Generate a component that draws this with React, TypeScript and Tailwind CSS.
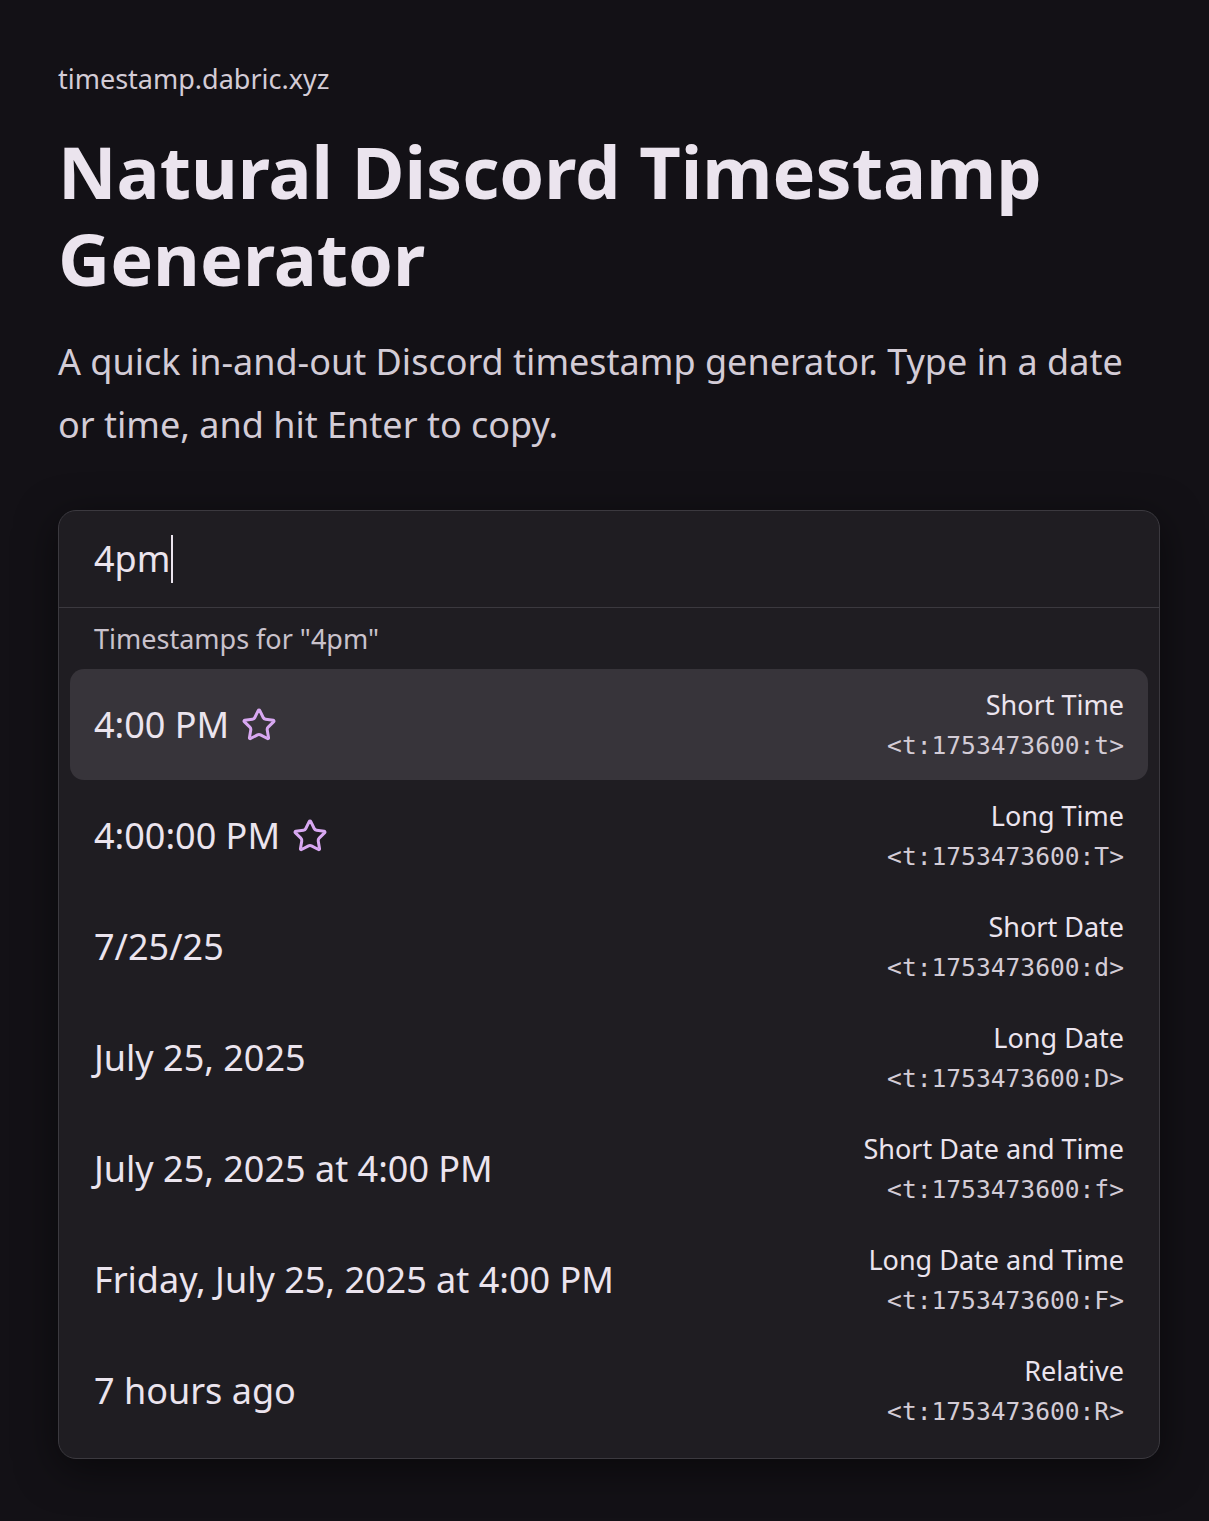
import { Star } from 'lucide-react';

const rows = [
  { text: '4:00 PM', star: true, label: 'Short Time', code: 't' },
  { text: '4:00:00 PM', star: true, label: 'Long Time', code: 'T' },
  { text: '7/25/25', star: false, label: 'Short Date', code: 'd' },
  { text: 'July 25, 2025', star: false, label: 'Long Date', code: 'D' },
  { text: 'July 25, 2025 at 4:00 PM', star: false, label: 'Short Date and Time', code: 'f' },
  { text: 'Friday, July 25, 2025 at 4:00 PM', star: false, label: 'Long Date and Time', code: 'F' },
  { text: '7 hours ago', star: false, label: 'Relative', code: 'R' },
];

export default function App() {
  return (
    <div className="min-h-[1521px] bg-[#131116] text-[#ebe4ee] font-['Noto_Sans',sans-serif] pl-[58px] pr-[49px] pt-[61px] pb-[62px]">
      <div className="text-[27px] leading-[36px] text-[#d3ccd6]">timestamp.dabric.xyz</div>
      <h1 className="mt-[31px] text-[72px] leading-[87px] font-bold">
        Natural Discord Timestamp Generator
      </h1>
      <p className="mt-[28px] text-[36px] leading-[63px] text-[#d3ccd6]">
        A quick in-and-out Discord timestamp generator. Type in a date or time, and hit Enter to copy.
      </p>

      <div className="mt-[54px] rounded-[18px] border border-[#3b393f] bg-[#1f1d22] shadow-[0_10px_40px_rgba(0,0,0,0.5)]">
        <div className="flex h-[97px] items-center px-[35px] border-b border-[#3b393f]">
          <span className="text-[36px] text-[#ebe4ee]">4pm</span>
          <span className="ml-[1px] h-[48px] w-[1.5px] bg-[#ebe4ee]" />
        </div>
        <div className="px-[11px] pb-[12px]">
          <div className="px-[24px] pt-[14px] pb-[13px] text-[27px] leading-[34px] text-[#c9c2cc]">
            Timestamps for "4pm"
          </div>
          {rows.map((r, i) => (
            <div
              key={r.code}
              className={`flex h-[111px] items-center justify-between rounded-[14px] pl-[24px] pr-[24px] ${i === 0 ? 'bg-[#37343a]' : ''}`}
            >
              <div className="flex items-center gap-[12px] text-[36px] text-[#ebe4ee]">
                <span>{r.text}</span>
                {r.star && <Star className="h-[36px] w-[36px] text-[#d8a8f2]" strokeWidth={2} />}
              </div>
              <div className="flex flex-col items-end pt-[2px]">
                <span className="text-[27px] leading-[40px] text-[#ebe4ee]">{r.label}</span>
                <span className="font-['DejaVu_Sans_Mono',monospace] text-[24.6px] leading-[41px] text-[#d3ccd6]">
                  {`<t:1753473600:${r.code}>`}
                </span>
              </div>
            </div>
          ))}
        </div>
      </div>
    </div>
  );
}
